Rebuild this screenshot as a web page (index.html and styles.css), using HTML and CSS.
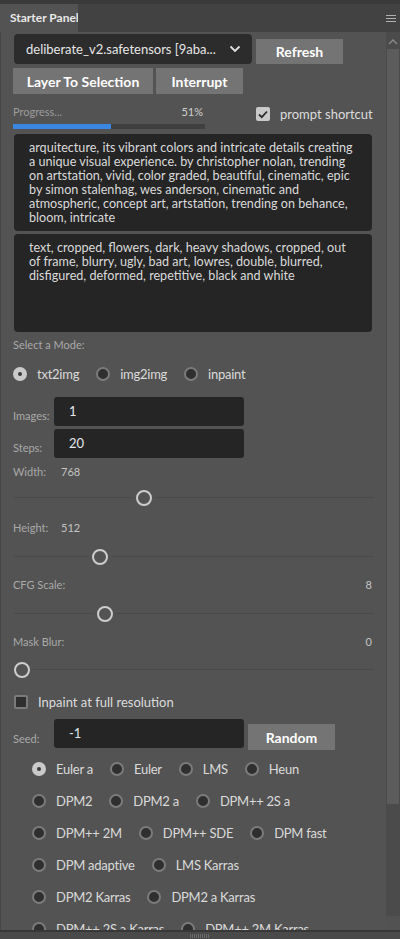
FILE: index.html
```html
<!DOCTYPE html>
<html>
<head>
<meta charset="utf-8">
<link rel="stylesheet" href="styles.css">
</head>
<body>
<div class="app">
  <div class="topbar">
    <div class="tab">Starter Panel</div>
    <div class="menu"><span></span><span></span><span></span></div>
  </div>
  <div class="body">
    <div class="content">
      <div class="row1">
        <div class="select">
          <span class="select-text">deliberate_v2.safetensors [9aba...</span>
          <svg class="chev" width="12" height="8" viewBox="0 0 12 8"><path d="M1.5 1.5 L6 6 L10.5 1.5" fill="none" stroke="#e0e0e0" stroke-width="1.8"/></svg>
        </div>
        <div class="btn btn-refresh">Refresh</div>
      </div>
      <div class="row2">
        <div class="btn btn-layer">Layer To Selection</div>
        <div class="btn btn-interrupt">Interrupt</div>
      </div>
      <div class="progress-row">
        <div class="progress">
          <div class="progress-labels"><span class="muted">Progress...</span><span class="pct">51%</span></div>
          <div class="bar"><div class="bar-fill" style="width:51%"></div></div>
        </div>
        <div class="check-wrap">
          <span class="checkbox checked"><svg width="10" height="9" viewBox="0 0 10 9"><path d="M1 4.5 L3.8 7.2 L9 1.5" fill="none" stroke="#2e2e2e" stroke-width="1.8"/></svg></span>
          <span class="check-label">prompt shortcut</span>
        </div>
      </div>
      <div class="textarea ta1">
        <div class="ln">arquitecture, its vibrant colors and intricate details creating</div>
        <div class="ln">a unique visual experience. by christopher nolan, trending</div>
        <div class="ln">on artstation, vivid, color graded, beautiful, cinematic, epic</div>
        <div class="ln">by simon stalenhag, wes anderson, cinematic and</div>
        <div class="ln">atmospheric, concept art, artstation, trending on behance,</div>
        <div class="ln">bloom, intricate</div>
      </div>
      <div class="textarea ta2">
        <div class="ln">text, cropped, flowers, dark, heavy shadows, cropped, out</div>
        <div class="ln">of frame, blurry, ugly, bad art, lowres, double, blurred,</div>
        <div class="ln">disfigured, deformed, repetitive, black and white</div>
      </div>
      <div class="label mode-label">Select a Mode:</div>
      <div class="radios mode-radios">
        <span class="ritem"><span class="radio on"></span><span class="rlabel">txt2img</span></span>
        <span class="ritem"><span class="radio"></span><span class="rlabel">img2img</span></span>
        <span class="ritem"><span class="radio"></span><span class="rlabel">inpaint</span></span>
      </div>
      <div class="field f-images">
        <span class="label flabel">Images:</span>
        <div class="input">1</div>
      </div>
      <div class="field f-steps">
        <span class="label flabel">Steps:</span>
        <div class="input">20</div>
      </div>
      <div class="slabel s-width"><span class="label slname">Width:</span><span class="val">768</span></div>
      <div class="slider"><div class="thumb" style="left:122px"></div></div>
      <div class="slabel s-height"><span class="label slname">Height:</span><span class="val">512</span></div>
      <div class="slider"><div class="thumb" style="left:78px"></div></div>
      <div class="slabel s-cfg"><span class="label">CFG Scale:</span><span class="val right">8</span></div>
      <div class="slider"><div class="thumb" style="left:83px"></div></div>
      <div class="slabel s-blur"><span class="label">Mask Blur:</span><span class="val right">0</span></div>
      <div class="slider"><div class="thumb" style="left:0px"></div></div>
      <div class="check-row">
        <span class="checkbox"></span><span class="check-label">Inpaint at full resolution</span>
      </div>
      <div class="seed-row">
        <span class="label flabel seed-label">Seed:</span>
        <div class="input seed-input">-1</div>
        <div class="btn btn-random">Random</div>
      </div>
      <div class="samplers">
        <div class="radios srow">
          <span class="ritem"><span class="radio on"></span><span class="rlabel">Euler a</span></span>
          <span class="ritem"><span class="radio"></span><span class="rlabel">Euler</span></span>
          <span class="ritem"><span class="radio"></span><span class="rlabel">LMS</span></span>
          <span class="ritem"><span class="radio"></span><span class="rlabel">Heun</span></span>
        </div>
        <div class="radios srow">
          <span class="ritem"><span class="radio"></span><span class="rlabel">DPM2</span></span>
          <span class="ritem"><span class="radio"></span><span class="rlabel">DPM2 a</span></span>
          <span class="ritem"><span class="radio"></span><span class="rlabel">DPM++ 2S a</span></span>
        </div>
        <div class="radios srow">
          <span class="ritem"><span class="radio"></span><span class="rlabel">DPM++ 2M</span></span>
          <span class="ritem"><span class="radio"></span><span class="rlabel">DPM++ SDE</span></span>
          <span class="ritem"><span class="radio"></span><span class="rlabel">DPM fast</span></span>
        </div>
        <div class="radios srow">
          <span class="ritem"><span class="radio"></span><span class="rlabel">DPM adaptive</span></span>
          <span class="ritem"><span class="radio"></span><span class="rlabel">LMS Karras</span></span>
        </div>
        <div class="radios srow">
          <span class="ritem"><span class="radio"></span><span class="rlabel">DPM2 Karras</span></span>
          <span class="ritem"><span class="radio"></span><span class="rlabel">DPM2 a Karras</span></span>
        </div>
        <div class="radios srow srow-last">
          <span class="ritem"><span class="radio"></span><span class="rlabel">DPM++ 2S a Karras</span></span>
          <span class="ritem"><span class="radio"></span><span class="rlabel">DPM++ 2M Karras</span></span>
        </div>
      </div>
    </div>
    <div class="scrollbar">
      <div class="sb-up"><svg width="10" height="6" viewBox="0 0 10 6"><path d="M1 5 L5 1 L9 5" fill="none" stroke="#8a8a8a" stroke-width="1.4"/></svg></div>
      <div class="sb-thumb"></div>
      <div class="sb-rest"></div>
      <div class="sb-down"></div>
    </div>
  </div>
  <div class="footer"><div class="grip"></div></div>
</div>
</body>
</html>
```

FILE: styles.css
```css
html, body {
  margin: 0;
  padding: 0;
  background: #424242;
}
body {
  width: 400px;
  height: 939px;
  overflow: hidden;
  font-family: Lato, "Open Sans", sans-serif;
  color: #dcdcdc;
}
.app {
  width: 400px;
  height: 939px;
  display: flex;
  flex-direction: column;
}
.topbar {
  height: 28px;
  margin-top: 4px;
  background: #424242;
  display: flex;
  align-items: stretch;
  justify-content: space-between;
  box-shadow: 0 -4px 0 #3a3a3a;
}
.tab {
  width: 78px;
  background: #535353;
  color: #e8e8e8;
  font-weight: 700;
  font-size: 12px;
  line-height: 28px;
  padding-left: 10px;
  box-sizing: border-box;
  white-space: nowrap;
  overflow: hidden;
}
.menu {
  width: 10px;
  margin-right: 4px;
  display: flex;
  flex-direction: column;
  justify-content: center;
  gap: 2px;
  padding-top: 1px;
}
.menu span {
  display: block;
  height: 1px;
  background: #b0b0b0;
}
.body {
  height: 898px;
  display: flex;
  background: #535353;
}
.content {
  width: 386px;
  height: 898px;
  overflow: hidden;
  box-sizing: border-box;
  border-left: 1px solid #464646;
}
.scrollbar {
  width: 14px;
  background: #4b4b4b;
  display: flex;
  flex-direction: column;
}
.sb-up {
  height: 17px;
  display: flex;
  align-items: center;
  justify-content: center;
  padding-top: 2px;
  box-sizing: border-box;
}
.sb-thumb {
  height: 755px;
  margin: 0 1px;
  background: #5c5c5c;
}
.sb-rest {
  flex: 1;
}
.sb-down {
  height: 14px;
  background: #525252;
}
.footer {
  height: 9px;
  border-top: 2px solid #383838;
  background: #4a4a4a;
  display: flex;
  justify-content: center;
  align-items: flex-end;
}
.grip {
  width: 20px;
  height: 4px;
  margin-bottom: 1px;
  background: repeating-linear-gradient(90deg, #6a6a6a 0 1px, transparent 1px 2px);
}

/* rows */
.row1 {
  margin-top: 2px;
  padding-left: 13px;
  display: flex;
  align-items: flex-end;
  gap: 4px;
}
.select {
  width: 238px;
  height: 30px;
  background: #2c2c2c;
  border-radius: 4px;
  display: flex;
  align-items: center;
  justify-content: space-between;
  padding: 0 11px 0 12px;
  box-sizing: border-box;
  font-size: 13px;
  color: #e6e6e6;
}
.select-text {
  white-space: nowrap;
  overflow: hidden;
}
.btn {
  height: 26px;
  background: #747474;
  color: #ffffff;
  font-weight: 700;
  font-size: 14px;
  display: flex;
  align-items: center;
  justify-content: center;
  box-sizing: border-box;
  white-space: nowrap;
}
.btn-refresh {
  width: 87px;
  height: 25px;
}
.row2 {
  margin-top: 4px;
  padding-left: 12px;
  display: flex;
  gap: 3px;
}
.btn-layer { width: 140px; }
.btn-interrupt { width: 87px; }

.progress-row {
  margin-top: 10px;
  padding-left: 12px;
  display: flex;
  align-items: flex-start;
}
.progress {
  width: 192px;
}
.progress-labels {
  display: flex;
  justify-content: space-between;
  height: 16px;
  line-height: 16px;
  font-size: 11px;
  padding-right: 2px;
}
.muted { color: #9c9c9c; }
.pct { color: #cfcfcf; }
.bar {
  margin-top: 4px;
  height: 5px;
  background: #3f3f3f;
  border-radius: 1px;
}
.bar-fill {
  height: 5px;
  background: #3a86e0;
}
.check-wrap {
  margin-left: 51px;
  margin-top: 2px;
  display: flex;
  align-items: center;
  gap: 10px;
}
.checkbox {
  width: 14px;
  height: 14px;
  box-sizing: border-box;
  border: 2px solid #7a7a7a;
  background: #2f2f2f;
  border-radius: 2px;
  display: inline-flex;
  align-items: center;
  justify-content: center;
}
.checkbox.checked {
  background: #c9c9c9;
  border-color: #c9c9c9;
}
.check-label {
  font-size: 13px;
  color: #dcdcdc;
  line-height: 16px;
  white-space: nowrap;
}

.textarea {
  margin-left: 13px;
  width: 358px;
  background: #252525;
  border-radius: 4px;
  box-sizing: border-box;
  padding: 7px 4px 0 15px;
  font-family: Lato, sans-serif;
  font-size: 12.6px;
  line-height: 14px;
  color: #dadada;
  overflow: hidden;
}
.ln {
  white-space: nowrap;
}
.ta1 {
  margin-top: 5px;
  height: 97px;
}
.ta2 {
  margin-top: 3px;
  height: 98px;
}
.label {
  color: #a9a9a9;
  font-size: 11px;
}
.mode-label {
  margin-top: 5px;
  padding-left: 12px;
  line-height: 16px;
}
.radios {
  display: flex;
  align-items: center;
  white-space: nowrap;
}
.ritem {
  display: inline-flex;
  align-items: center;
  margin-right: 17px;
}
.radio {
  width: 14px;
  height: 14px;
  flex: none;
  box-sizing: border-box;
  border-radius: 50%;
  border: 2px solid #7b7b7b;
  background: #2f2f2f;
  margin-right: 10px;
  position: relative;
}
.radio.on {
  border-color: #cacaca;
  background: #cacaca;
}
.radio.on::after {
  content: "";
  position: absolute;
  left: 3px;
  top: 3px;
  width: 4px;
  height: 4px;
  border-radius: 50%;
  background: #3a3a3a;
}
.rlabel {
  font-size: 13px;
  letter-spacing: -0.25px;
  color: #dadada;
  line-height: 16px;
}
.mode-radios {
  margin-top: 13px;
  padding-left: 12px;
}
.field {
  display: flex;
  align-items: center;
  padding-left: 12px;
}
.flabel {
  width: 41px;
  padding-top: 7px;
}
.input {
  width: 190px;
  height: 29px;
  background: #252525;
  border-radius: 3px;
  box-sizing: border-box;
  padding-left: 15px;
  padding-bottom: 2px;
  display: flex;
  align-items: center;
  font-size: 13px;
  color: #e4e8ec;
}
.f-images { margin-top: 15px; }
.f-steps { margin-top: 3px; }
.slabel {
  padding-left: 12px;
  padding-right: 14px;
  display: flex;
  line-height: 16px;
}
.slname {
  width: 48px;
}
.val {
  font-size: 11px;
  color: #c4c4c4;
}
.val.right { margin-left: auto; }
.s-width { margin-top: 6px; }
.s-height { margin-top: 13px; }
.s-cfg { margin-top: 11px; }
.s-blur { margin-top: 11px; }
.slider {
  margin: 9px 0 0 13px;
  width: 360px;
  height: 18px;
  position: relative;
  background: linear-gradient(#4a4a4a, #4a4a4a) 0 8px / 100% 1px no-repeat;
}
.s-height + .slider, .s-cfg + .slider { margin-top: 12px; }
.s-blur + .slider { margin-top: 11px; }
.thumb {
  position: absolute;
  top: 1px;
  width: 16px;
  height: 16px;
  box-sizing: border-box;
  border-radius: 50%;
  border: 2px solid #cdcdcd;
  background: #535353;
  box-shadow: 0 0 0 3px #535353;
}
.check-row {
  margin-top: 15px;
  padding-left: 13px;
  display: flex;
  align-items: center;
  gap: 10px;
}
.seed-row {
  margin-top: 9px;
  padding-left: 12px;
  display: flex;
  align-items: flex-start;
}
.seed-label {
  padding-top: 12px;
  line-height: 16px;
}
.seed-input { color: #d8e6f0; }
.btn-random {
  width: 87px;
  margin-top: 5px;
  margin-left: 4px;
}
.samplers {
  margin-top: 3px;
  padding-left: 31px;
}
.srow {
  height: 32px;
}
```
